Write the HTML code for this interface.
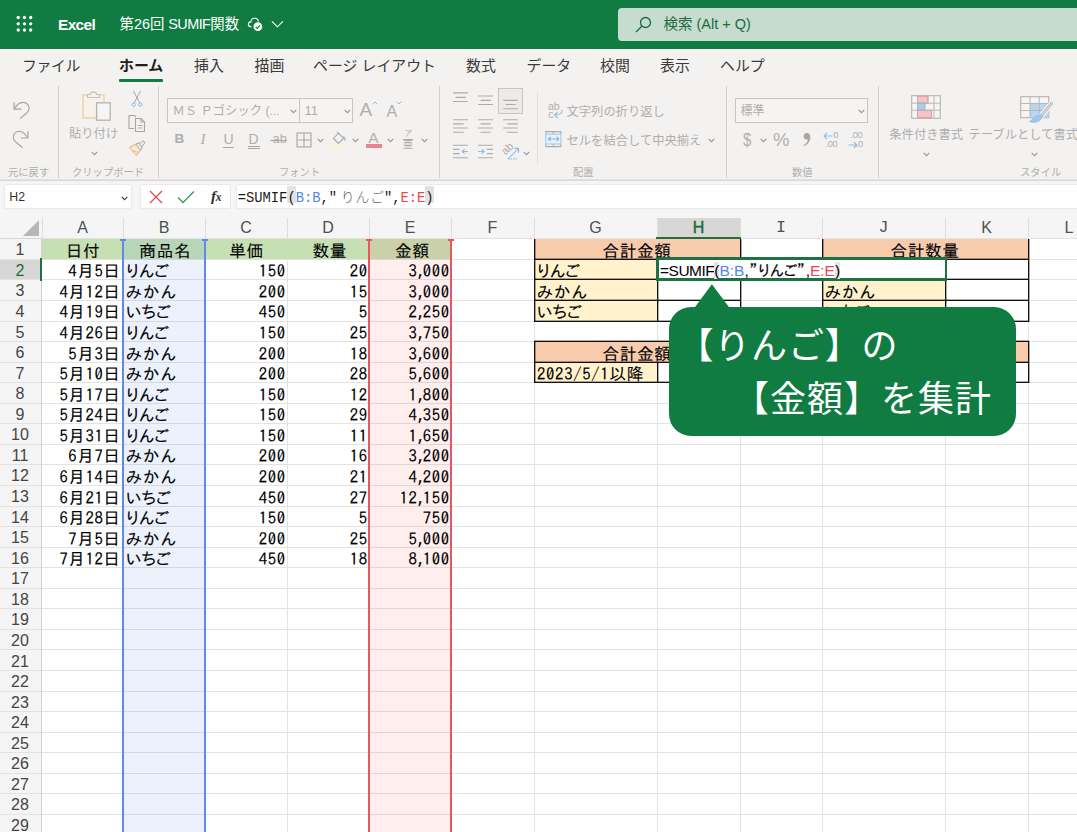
<!DOCTYPE html><html lang="ja"><head><meta charset="utf-8"><title>Excel</title><style>
*{box-sizing:border-box;margin:0;padding:0}
html,body{width:1077px;height:832px;overflow:hidden;background:#fff}
body{position:relative;font-family:"Liberation Sans","Noto Sans CJK JP",sans-serif;color:#252423}
.abs{position:absolute}
#topbar{position:absolute;left:0;top:0;width:1077px;height:48.5px;background:#107c41}
#topbar .t{position:absolute;color:#fff;white-space:nowrap}
#search{position:absolute;left:617.5px;top:7.5px;width:470px;height:33px;background:#c5dccf;border-radius:4px}
#search .t{color:#1d6a41}
#tabs{position:absolute;left:0;top:48.5px;width:1077px;height:36px;background:#f3f2f1}
#tabs .tab{position:absolute;top:0;height:36px;line-height:35px;font-size:14.9px;color:#3b3a39;white-space:nowrap}
#ribbon{position:absolute;left:0;top:84px;width:1077px;height:97px;background:#f3f2f1}
#ribbon .sep{position:absolute;top:2px;height:92px;width:1px;background:#d2d0ce}
#ribbon .lbl{position:absolute;font-size:10.3px;color:#b0aeac;white-space:nowrap;top:80.7px;line-height:16px}
#ribbon .g{position:absolute;color:#b0aeac;white-space:nowrap}
#fbar{position:absolute;left:0;top:181px;width:1077px;height:36px;background:#f5f5f5}
#fbar .box{position:absolute;top:3px;height:25px;background:#fff;border:1px solid #ebe9e7;border-radius:2px}
#grid{position:absolute;left:0;top:0;width:1077px;height:832px;overflow:hidden;pointer-events:none}
.colhdr{position:absolute;left:0;top:217px;width:1077px;height:21.5px;background:#f5f5f5;border-bottom:1px solid #d4d4d4}
.rowhdr{position:absolute;left:0;top:238.5px;width:42px;height:600px;background:#f5f5f5;border-right:1px solid #d4d4d4}
.cl{position:absolute;top:217px;height:21px;line-height:22px;text-align:center;font-size:16px;color:#505050;font-family:"Liberation Sans",sans-serif}
.cl.sel{background:#d9d7d5;color:#1e6b41;-webkit-text-stroke:0.45px #1e6b41;top:218px;height:20px;line-height:20px}
.chs{position:absolute;top:218px;height:21px;width:1px;background:#dedede}
.rn{position:absolute;left:0;width:40px;text-align:center;font-size:16px;color:#444;line-height:21px;font-family:"Liberation Sans",sans-serif}
.rn.sel{background:#d9d7d5;color:#1e6b41}
.hl{position:absolute;left:42px;width:1040px;height:1px;background:#e3e3e3}
.vl{position:absolute;top:239px;height:600px;width:1px;background:#e3e3e3}
.c{position:absolute;font-family:"IPAPGothic","IPAGothic","Noto Sans CJK JP",sans-serif;font-size:16.7px;color:#000;white-space:nowrap;overflow:visible;-webkit-text-stroke:0.1px #000}
.c.r{text-align:right}
.c.m{text-align:center;letter-spacing:0.6px}
.fill{position:absolute}
.bk{position:absolute;background:#111}
.bk2{position:absolute;background:rgba(0,0,0,0.33)}
.ed{font-family:"Liberation Sans","IPAGothic",sans-serif;font-size:15.5px;color:#000;white-space:nowrap}
.ed .hp{background:#e5e5e5}
.c.n{font-family:"IPAGothic","Noto Sans CJK JP",sans-serif;letter-spacing:0.7px}
.cm{margin-right:-3.8px}
#ribbon .sep2{position:absolute;top:8px;height:72px;width:1px;background:#e1dfdd}
.chev{fill:none;stroke:#989694;stroke-width:1.1}
.ibox{border:1px solid #c8c6c4;background:#f5f4f3}
.fx{font-family:"Liberation Mono","Noto Sans CJK JP",monospace;font-size:13.8px;line-height:18px;color:#1b1b1b;white-space:nowrap}
.fx .hp{position:relative;z-index:0}
.fx .hp::before{content:'';position:absolute;left:0;right:0;top:-5px;bottom:2.5px;background:#e2e2e2;z-index:-1}
.fx .bl{color:#5b84e3}
.fx .rd{color:#e8474f}
.fx .jp{font-family:"Noto Sans CJK JP",sans-serif;font-weight:300;color:#666;letter-spacing:0.9px;margin:0 -1px 0 3.8px}
#ribbon .dc{font-size:9.3px;line-height:9px;letter-spacing:-0.35px}
.ed .fn{letter-spacing:-0.5px}
.ed .jq{font-family:"IPAPGothic","IPAGothic",sans-serif;font-size:15.2px;-webkit-text-stroke:0.15px #000;margin-left:1px}
.c.d{padding-right:2.6px !important;letter-spacing:0.5px}

</style></head><body>
<div id="topbar">
  <svg class="abs" style="left:15px;top:14px" width="20" height="20" viewBox="0 0 20 20" fill="#fff">
    <circle cx="3.2" cy="3.5" r="1.65"/><circle cx="9.45" cy="3.5" r="1.65"/><circle cx="15.7" cy="3.5" r="1.65"/>
    <circle cx="3.2" cy="9.8" r="1.65"/><circle cx="9.45" cy="9.8" r="1.65"/><circle cx="15.7" cy="9.8" r="1.65"/>
    <circle cx="3.2" cy="16" r="1.65"/><circle cx="9.45" cy="16" r="1.65"/><circle cx="15.7" cy="16" r="1.65"/>
  </svg>
  <div class="t" style="left:58px;top:14px;font-size:15.4px;font-weight:bold;line-height:22px;letter-spacing:-0.6px">Excel</div>
  <div class="t" style="left:119.5px;top:13px;font-size:14.4px;line-height:22px">第26回 <span style="letter-spacing:-0.55px">SUMIF</span>関数</div>
  <svg class="abs" style="left:246px;top:16px" width="18" height="18" viewBox="0 0 18 18" fill="none"><path d="M5.2 10.8 C1.6 10.8 1.4 6.2 4.8 5.9 C5.2 1.2 11.6 1.2 12.3 5.2" stroke="#fff" stroke-width="1.1" stroke-linecap="round"/><circle cx="11.9" cy="10.7" r="4.4" fill="#fff"/><path d="M9.7 10.9 L11.2 12.4 L14 9.3" stroke="#107c41" stroke-width="1.1"/></svg>
  <svg class="abs" style="left:271px;top:20px" width="13" height="8" viewBox="0 0 13 8" fill="none" stroke="#fff" stroke-width="1.1"><path d="M0.9 1.3 L6.4 6.8 L11.9 1.3"/></svg>
  <div id="search">
    <svg class="abs" style="left:17px;top:8px" width="17" height="17" viewBox="0 0 17 17" fill="none" stroke="#1d6a41" stroke-width="1.3"><circle cx="10.5" cy="6.5" r="5"/><path d="M7 10 L1 16"/></svg>
    <div class="t" style="left:46px;top:6px;font-size:14.5px;line-height:21px">検索 (Alt + Q)</div>
  </div>
</div>
<div id="tabs">
  <div class="tab" style="left:22px;letter-spacing:-0.4px">ファイル</div>
  <div class="tab" style="left:119px;font-weight:bold;color:#201f1e">ホーム</div>
  <div class="abs" style="left:119px;top:30px;width:44px;height:3px;background:#107c41;border-radius:1px"></div>
  <div class="tab" style="left:194px">挿入</div>
  <div class="tab" style="left:254.5px">描画</div>
  <div class="tab" style="left:313px">ページ レイアウト</div>
  <div class="tab" style="left:466px">数式</div>
  <div class="tab" style="left:526.5px">データ</div>
  <div class="tab" style="left:600px">校閲</div>
  <div class="tab" style="left:660px">表示</div>
  <div class="tab" style="left:720px">ヘルプ</div>
</div>
<div id="ribbon">
  <div class="sep" style="left:58px"></div>
  <div class="sep" style="left:157.5px"></div>
  <div class="sep" style="left:439px"></div>
  <div class="sep" style="left:726px"></div>
  <div class="sep" style="left:878px"></div>
  <div class="sep2" style="left:537px"></div>
  <div class="lbl" style="left:8px">元に戻す</div>
  <div class="lbl" style="left:72px">クリップボード</div>
  <div class="lbl" style="left:279px">フォント</div>
  <div class="lbl" style="left:573px">配置</div>
  <div class="lbl" style="left:792px">数値</div>
  <div class="lbl" style="left:1020px">スタイル</div>

  <!-- undo / redo -->
  <svg class="abs" style="left:12px;top:16px" width="20" height="20" viewBox="0 0 20 20" fill="none" stroke="#a8a6a4" stroke-width="1.2"><path d="M2 2.3 V9.2 H9.3"/><path d="M2.6 8.8 C4.5 5 7.5 2.4 11 2.4 C14.5 2.4 17.1 5 17.1 8.3 C17.1 10.5 16 12 14.5 13.3 L8 18.6"/></svg>
  <svg class="abs" style="left:11px;top:46px" width="20" height="20" viewBox="0 0 20 20" fill="none" stroke="#a8a6a4" stroke-width="1.2"><path d="M16.9 1.3 V8 H9.8"/><path d="M16.3 7.7 C14.4 4 11.5 1.4 8 1.4 C4.5 1.4 2.4 4 2.4 7.4 C2.4 9.6 3.5 11 5 12.3 L11.7 17.7"/></svg>

  <!-- paste -->
  <svg class="abs" style="left:80px;top:4px" width="34" height="36" viewBox="0 0 34 36" fill="none">
    <path d="M8 7 L3 7 L3 30 L16 30 M19 7 L24 7 L24 14" stroke="#f5cfa3" stroke-width="1.4"/>
    <rect x="4" y="8" width="19" height="21" fill="#fbf1e2" opacity="0.45"/>
    <path d="M7.5 9.5 L7.5 6.5 L10.5 6.5 C10.5 3 16.5 3 16.5 6.5 L19.5 6.5 L19.5 9.5 Z" stroke="#c4c2c0" stroke-width="1.1" fill="#f3f2f1"/>
    <rect x="16.6" y="14.8" width="13.6" height="17.4" stroke="#b5b3b1" stroke-width="1.3" fill="#f6f5f4"/>
  </svg>
  <div class="g" style="left:69px;top:41px;font-size:12.3px;line-height:18px">貼り付け</div>
  <svg class="abs chev" style="left:90.5px;top:67px" width="7" height="5" viewBox="0 0 7 5"><path d="M0.7 0.8 L3.5 3.6 L6.3 0.8"/></svg>
  <!-- cut -->
  <svg class="abs" style="left:130px;top:6px" width="14" height="18" viewBox="0 0 14 18" fill="none"><path d="M3.5 1 L9.8 13 M10.5 1 L4.2 13" stroke="#a9a7a5" stroke-width="1"/><circle cx="3.7" cy="14.6" r="1.7" stroke="#8dbde6" stroke-width="1"/><circle cx="10.3" cy="14.6" r="1.7" stroke="#8dbde6" stroke-width="1"/></svg>
  <!-- copy -->
  <svg class="abs" style="left:127px;top:30px" width="20" height="19" viewBox="0 0 20 19" fill="none" stroke="#a9a7a5" stroke-width="1.1"><path d="M7 14.5 L2 14.5 L2 1.5 L7.5 1.5 L9 3"/><path d="M8.5 4.5 L14 4.5 L17.5 8 L17.5 17.5 L8.5 17.5 Z" fill="#f3f2f1"/><path d="M14 4.5 L14 8 L17.5 8"/><path d="M11 11.5 L15.5 11.5 M11 14 L15.5 14" stroke-width="0.9"/></svg>
  <!-- format painter -->
  <svg class="abs" style="left:128px;top:55px" width="19" height="18" viewBox="0 0 19 18" fill="none"><path d="M1.5 8.5 L9 4.5 L13 10.5 L8.5 16.5 Z" fill="#fbe7d0" stroke="#efb98a" stroke-width="1.1"/><path d="M4 11.5 L10.5 13.5" stroke="#efb98a" stroke-width="1"/><path d="M8.3 5.3 L10.6 3.8 L14.2 9.2 L12 10.7 Z M11.5 4.8 L15 1.7 L16.8 3.5 L14 7.6" stroke="#b5b3b1" stroke-width="1.1" fill="#f6f5f4"/></svg>

  <!-- font box -->
  <div class="abs ibox" style="left:166.5px;top:14px;width:133.5px;height:25px"></div>
  <div class="abs ibox" style="left:299px;top:14px;width:54px;height:25px"></div>
  <div class="g" style="left:172.5px;top:18px;font-size:12.3px;line-height:18px">ＭＳ Ｐゴシック (...</div>
  <svg class="abs chev" style="left:290px;top:25px" width="7" height="5" viewBox="0 0 7 5"><path d="M0.7 0.8 L3.5 3.6 L6.3 0.8"/></svg>
  <div class="g" style="left:304.5px;top:18px;font-size:13px;line-height:18px">11</div>
  <svg class="abs chev" style="left:343.5px;top:25px" width="7" height="5" viewBox="0 0 7 5"><path d="M0.7 0.8 L3.5 3.6 L6.3 0.8"/></svg>
  <div class="g" style="left:359.5px;top:14px;font-size:19px;line-height:24px">A</div>
  <svg class="abs" style="left:372px;top:17px" width="6" height="4" viewBox="0 0 6 4" fill="none" stroke="#8dbde6" stroke-width="1"><path d="M0.7 3.3 L3 1 L5.3 3.3"/></svg>
  <div class="g" style="left:386.5px;top:17px;font-size:16px;line-height:22px">A</div>
  <svg class="abs" style="left:396px;top:17px" width="6" height="4" viewBox="0 0 6 4" fill="none" stroke="#8dbde6" stroke-width="1"><path d="M0.7 0.7 L3 3 L5.3 0.7"/></svg>
  <!-- B I U D ab -->
  <div class="g" style="left:174.5px;top:45.3px;font-size:13.5px;line-height:20px;font-weight:bold">B</div>
  <div class="g" style="left:200.5px;top:45.3px;font-size:15px;line-height:20px;font-style:italic;font-family:'Liberation Serif',serif">I</div>
  <div class="g" style="left:223.5px;top:45.3px;font-size:14px;line-height:20px">U</div>
  <div class="abs" style="left:223px;top:62.5px;width:11px;height:1px;background:#a9a7a5"></div>
  <div class="g" style="left:248.5px;top:45.3px;font-size:14px;line-height:20px">D</div>
  <div class="abs" style="left:248px;top:61.5px;width:12px;height:3px;border-top:1px solid #a9a7a5;border-bottom:1px solid #a9a7a5"></div>
  <div class="g" style="left:272.5px;top:45.3px;font-size:13px;line-height:20px">ab</div>
  <div class="abs" style="left:270px;top:56px;width:17px;height:1px;background:#a9a7a5"></div>
  <!-- borders -->
  <svg class="abs" style="left:295.5px;top:47.5px" width="16" height="16" viewBox="0 0 16 16" fill="none" stroke="#a9a7a5" stroke-width="1.1"><rect x="1" y="1" width="14" height="14"/><path d="M8 1 L8 15 M1 8 L15 8"/></svg>
  <svg class="abs chev" style="left:317px;top:54px" width="7" height="5" viewBox="0 0 7 5"><path d="M0.7 0.8 L3.5 3.6 L6.3 0.8"/></svg>
  <!-- fill color -->
  <svg class="abs" style="left:330px;top:46px" width="18" height="18" viewBox="0 0 18 18" fill="none"><path d="M3.5 8.5 L8.5 3 L13.5 8.5 L8.5 13.5 Z" stroke="#a9a7a5" stroke-width="1.1"/><path d="M7 1.5 L9.5 4.5" stroke="#a9a7a5" stroke-width="1"/><path d="M13.2 6.5 C15 8 15.2 10 14.6 11" stroke="#8dbde6" stroke-width="1.1"/><rect x="0.5" y="15" width="16" height="3" fill="#faf4d6"/></svg>
  <svg class="abs chev" style="left:351.5px;top:54px" width="7" height="5" viewBox="0 0 7 5"><path d="M0.7 0.8 L3.5 3.6 L6.3 0.8"/></svg>
  <!-- font color -->
  <div class="g" style="left:368.5px;top:44px;font-size:15px;line-height:20px">A</div>
  <div class="abs" style="left:365.5px;top:60.3px;width:16.5px;height:3.5px;background:#ee828a"></div>
  <svg class="abs chev" style="left:386.5px;top:54px" width="7" height="5" viewBox="0 0 7 5"><path d="M0.7 0.8 L3.5 3.6 L6.3 0.8"/></svg>
  <!-- phonetic -->
  <div class="g" style="left:404.3px;top:44.7px;font-size:8px;line-height:9px">ア</div>
  <div class="abs" style="left:403px;top:54.5px;width:10px;height:1px;background:#a9a7a5"></div>
  <div class="g" style="left:403px;top:55.5px;font-size:10px;line-height:10px">亜</div>
  <svg class="abs chev" style="left:421px;top:54px" width="7" height="5" viewBox="0 0 7 5"><path d="M0.7 0.8 L3.5 3.6 L6.3 0.8"/></svg>

  <!-- alignment icons -->
  <div class="abs" style="left:498px;top:4px;width:25px;height:25.5px;border:1px solid #c8c6c4;background:#edebe9"></div>
  <svg class="abs" style="left:450px;top:4px" width="82" height="76" viewBox="0 0 82 76" fill="none" stroke="#aeacaa" stroke-width="1.1"><path d="M3.1 4.9 H17.9 M5.6 9.4 H15.8 M3.1 13.5 H17.9"/><path d="M28.1 8 H42.9 M30.6 12.4 H40.8 M28.1 16.5 H42.9"/><path d="M53.2 12.4 H67.8 M55.7 16.5 H65.7 M53.2 20.7 H67.8"/><path d="M3.1 31.7 H17.9 M3.1 35.9 H13.7 M3.1 40 H17.9 M3.1 44.2 H13.7"/><path d="M28.1 31.7 H42.9 M30.5 35.9 H40.7 M28.1 40 H42.9 M30.5 44.2 H40.7"/><path d="M53.2 31.7 H67.8 M57.2 35.9 H67.8 M53.2 40 H67.8 M57.2 44.2 H67.8"/><path d="M3.1 57.3 H17.9 M3.1 61.4 H9.5 M3.1 65.6 H9.5 M3.1 69.8 H17.9"/><path d="M17.9 63.5 H12.2 M14.6 61.1 L12.2 63.5 L14.6 65.9" stroke="#8dbde6"/><path d="M28.1 57.3 H42.9 M36.7 61.4 H42.9 M36.7 65.6 H42.9 M28.1 69.8 H42.9"/><path d="M28.1 63.5 H34.2 M31.8 61.1 L34.2 63.5 L31.8 65.9" stroke="#8dbde6"/><path d="M58 70.9 L68.4 60.6 M64.2 60.4 H68.6 V64.8" stroke="#8dbde6"/><path d="M58 70.9 H67" stroke="#8dbde6" stroke-dasharray="1.6 1"/></svg>
  <div class="g" style="left:501.5px;top:54.5px;font-size:11px;line-height:12px;transform:rotate(-45deg);transform-origin:left bottom;margin-top:6px;margin-left:5px">ab</div>
  <svg class="abs chev" style="left:523.2px;top:66.5px" width="7" height="5" viewBox="0 0 7 5"><path d="M0.7 0.8 L3.5 3.6 L6.3 0.8"/></svg>

  <!-- wrap text -->
  <div class="g" style="left:548px;top:17.2px;font-size:10.6px;line-height:10px;letter-spacing:-0.2px">ab</div>
  <div class="g" style="left:548.2px;top:24.7px;font-size:10.6px;line-height:10px">c</div>
  <svg class="abs" style="left:553px;top:24px" width="11" height="12" viewBox="0 0 11 12" fill="none" stroke="#8dbde6" stroke-width="1.1"><path d="M9 1.6 C10 5 7.5 6.6 1.8 6.9 M4.8 3.8 L1.6 6.9 L4.6 10"/></svg>
  <div class="g" style="left:566.5px;top:18.7px;font-size:12.3px;line-height:18px">文字列の折り返し</div>
  <!-- merge -->
  <svg class="abs" style="left:545px;top:47px" width="17" height="17" viewBox="0 0 17 17" fill="none"><path d="M0.8 3.1 V0.6 H15.9 V3.1 M0.8 13 V15.6 H15.9 V13 M8.35 0.6 V3.1 M8.35 13 V15.6" stroke="#aeacaa" stroke-width="1.1"/><rect x="0.8" y="3.1" width="15.1" height="9.9" fill="#e9f2fb" stroke="#9cc5ea" stroke-width="1"/><path d="M3.4 8.05 H13.8 M5.6 5.9 L3.4 8.05 L5.6 10.2 M11.6 5.9 L13.8 8.05 L11.6 10.2" stroke="#7fb4e3" stroke-width="1.1"/></svg>
  <div class="g" style="left:566.5px;top:47.5px;font-size:12.3px;line-height:18px">セルを結合して中央揃え</div>
  <svg class="abs chev" style="left:707.5px;top:54px" width="7" height="5" viewBox="0 0 7 5"><path d="M0.7 0.8 L3.5 3.6 L6.3 0.8"/></svg>

  <!-- number -->
  <div class="abs ibox" style="left:735px;top:14px;width:133px;height:25px"></div>
  <div class="g" style="left:740.5px;top:18px;font-size:12px;line-height:18px">標準</div>
  <svg class="abs chev" style="left:857.5px;top:25px" width="7" height="5" viewBox="0 0 7 5"><path d="M0.7 0.8 L3.5 3.6 L6.3 0.8"/></svg>
  <div class="g" style="left:742.5px;top:44.5px;font-size:17.5px;line-height:22px;transform:scale(0.85,1.05);transform-origin:left center">$</div>
  <svg class="abs chev" style="left:760px;top:54px" width="7" height="5" viewBox="0 0 7 5"><path d="M0.7 0.8 L3.5 3.6 L6.3 0.8"/></svg>
  <div class="g" style="left:773px;top:45px;font-size:18.5px;line-height:22px">%</div>
  <svg class="abs" style="left:801px;top:48px" width="12" height="16" viewBox="0 0 12 16"><path d="M5.9 1.1 C3.9 1.1 2.6 2.6 2.6 4.4 C2.6 6.2 4 7.6 5.7 7.6 C6.2 7.6 6.6 7.5 7 7.3 C6.6 10 4.9 12 2.5 13.3 L3 14.2 C6.8 12.6 9.3 9.2 9.3 5 C9.3 2.6 7.9 1.1 5.9 1.1 Z" fill="#a8a6a4"/></svg>
  <div class="g dc" style="left:833.3px;top:47px">0</div>
  <div class="g dc" style="left:825.5px;top:56px">.00</div>
  <svg class="abs" style="left:823px;top:47.5px" width="10" height="8" viewBox="0 0 10 8" fill="none" stroke="#8dbde6" stroke-width="1.1"><path d="M9.3 4 H1 M4 1 L1 4 L4 7"/></svg>
  <div class="g dc" style="left:850.5px;top:47px">.00</div>
  <div class="g dc" style="left:855.7px;top:56px">.0</div>
  <svg class="abs" style="left:847.5px;top:57px" width="10" height="8" viewBox="0 0 10 8" fill="none" stroke="#8dbde6" stroke-width="1.1"><path d="M0.5 4 H8.8 M5.8 1 L8.8 4 L5.8 7"/></svg>

  <!-- conditional formatting -->
  <svg class="abs" style="left:911px;top:11px" width="30" height="24" viewBox="0 0 30 24" fill="none"><rect x="0.7" y="0.7" width="28.6" height="22.6" fill="#f6f5f4" stroke="#b5b3b1" stroke-width="1.1"/><rect x="6.5" y="1.2" width="10.5" height="7" fill="#f4c4c8" stroke="#e9878e" stroke-width="0.8"/><rect x="6.5" y="8.2" width="7.5" height="7" fill="#a9cdee" stroke="#7fb2e0" stroke-width="0.8"/><rect x="6.5" y="15.2" width="14" height="7.5" fill="#f4c4c8" stroke="#e9878e" stroke-width="0.8"/><path d="M6.5 1 V23 M0.7 8.2 H29.3 M0.7 15.2 H29.3 M17 1 V8 M23 1 V23" stroke="#b5b3b1" stroke-width="0.9"/></svg>
  <div class="g" style="left:889.3px;top:41.5px;font-size:12.3px;line-height:18px">条件付き書式</div>
  <svg class="abs chev" style="left:922.5px;top:67.5px" width="7" height="5" viewBox="0 0 7 5"><path d="M0.7 0.8 L3.5 3.6 L6.3 0.8"/></svg>
  <!-- format as table -->
  <svg class="abs" style="left:1020px;top:10px" width="34" height="32" viewBox="0 0 34 32" fill="none"><rect x="0.7" y="2.7" width="28" height="21" fill="#f6f5f4" stroke="#b5b3b1" stroke-width="1.1"/><rect x="10" y="9.5" width="18.5" height="14" fill="#b9d6f1"/><path d="M10 2.7 V23.7 M19.3 2.7 V23.7 M0.7 9.5 H28.7 M0.7 16.5 H28.7" stroke="#b5b3b1" stroke-width="0.9"/><path d="M32 9 L19 24.5" stroke="#f3f2f1" stroke-width="5.5"/><path d="M31.6 9.4 L21 22" stroke="#b5b3b1" stroke-width="2.8" stroke-linecap="round"/><path d="M31.6 9.4 L21 22" stroke="#f6f5f4" stroke-width="1" stroke-linecap="round"/><path d="M20.6 20.8 C17 20.6 15 23 9.5 27.6 C14 29.5 21 28 22.4 22.6 Z" fill="#9cc7ec" stroke="#84b6e2" stroke-width="0.6"/></svg>
  <div class="g" style="left:968.5px;top:41.5px;font-size:12.3px;line-height:18px">テーブルとして書式設定</div>
  <svg class="abs chev" style="left:1031px;top:67.5px" width="7" height="5" viewBox="0 0 7 5"><path d="M0.7 0.8 L3.5 3.6 L6.3 0.8"/></svg>
</div>
<div class="abs" style="left:0;top:179px;width:1077px;height:2px;background:linear-gradient(#e9e7e5,#d6d4d2)"></div>
<div id="fbar">
  <div class="box" style="left:4.3px;width:127.7px"></div>
  <div class="box" style="left:140.4px;width:90.6px"></div>
  <div class="box" style="left:235.6px;width:850px"></div>
  <div class="abs" style="left:9.3px;top:7.3px;font-size:12.3px;line-height:18px;color:#323130">H2</div>
  <svg class="abs" style="left:121px;top:14.5px" width="7" height="5" viewBox="0 0 7 5" fill="none" stroke="#444" stroke-width="1.2"><path d="M0.7 0.8 L3.5 3.6 L6.3 0.8"/></svg>
  <svg class="abs" style="left:148.5px;top:9px" width="14" height="14" viewBox="0 0 14 14" fill="none" stroke="#e8474f" stroke-width="1.3"><path d="M1 1 L13 13 M13 1 L1 13"/></svg>
  <svg class="abs" style="left:177px;top:9px" width="18" height="14" viewBox="0 0 18 14" fill="none" stroke="#3a9a56" stroke-width="1.3"><path d="M1 7.5 L6 12.5 L17 1.5"/></svg>
  <div class="abs" style="left:211px;top:6.3px;font-size:14.5px;line-height:18px;font-style:italic;font-family:'Liberation Serif',serif;color:#323130;letter-spacing:-0.5px"><b style="font-size:15.5px">f</b><b style="font-size:11.5px">x</b></div>
  <div class="abs fx" style="left:237.7px;top:5.8px">=SUMIF<span class="hp">(</span><span class="bl">B:B</span>,"<span class="jp">りんご</span>",<span class="rd">E:E</span><span class="hp">)</span></div>
</div>

<div id="grid">
<div class="colhdr"></div>
<div class="cl" style="left:42px;width:81px">A</div>
<div class="cl" style="left:123px;width:82px">B</div>
<div class="cl" style="left:205px;width:82px">C</div>
<div class="cl" style="left:287px;width:82px">D</div>
<div class="cl" style="left:369px;width:82px">E</div>
<div class="cl" style="left:451px;width:83px">F</div>
<div class="cl" style="left:534px;width:123px">G</div>
<div class="cl sel" style="left:657px;width:83px">H</div>
<div class="cl" style="left:740px;width:82px;font-family:'Liberation Mono',monospace;font-size:16.5px">I</div>
<div class="cl" style="left:822px;width:123px;font-family:'Liberation Mono',monospace;font-size:16.5px">J</div>
<div class="cl" style="left:945px;width:83px">K</div>
<div class="cl" style="left:1028px;width:82px">L</div>
<div class="chs" style="left:42px"></div>
<div class="chs" style="left:123px"></div>
<div class="chs" style="left:205px"></div>
<div class="chs" style="left:287px"></div>
<div class="chs" style="left:369px"></div>
<div class="chs" style="left:451px"></div>
<div class="chs" style="left:534px"></div>
<div class="chs" style="left:657px"></div>
<div class="chs" style="left:740px"></div>
<div class="chs" style="left:822px"></div>
<div class="chs" style="left:945px"></div>
<div class="chs" style="left:1028px"></div>
<div class="rowhdr"></div>
<div class="rn" style="top:239.30px;height:20.56px">1</div>
<div class="rn sel" style="top:259.86px;height:20.56px">2</div>
<div class="rn" style="top:280.42px;height:20.56px">3</div>
<div class="rn" style="top:300.98px;height:20.56px">4</div>
<div class="rn" style="top:321.54px;height:20.56px">5</div>
<div class="rn" style="top:342.10px;height:20.56px">6</div>
<div class="rn" style="top:362.66px;height:20.56px">7</div>
<div class="rn" style="top:383.22px;height:20.56px">8</div>
<div class="rn" style="top:403.78px;height:20.56px">9</div>
<div class="rn" style="top:424.34px;height:20.56px">10</div>
<div class="rn" style="top:444.90px;height:20.56px">11</div>
<div class="rn" style="top:465.46px;height:20.56px">12</div>
<div class="rn" style="top:486.02px;height:20.56px">13</div>
<div class="rn" style="top:506.58px;height:20.56px">14</div>
<div class="rn" style="top:527.14px;height:20.56px">15</div>
<div class="rn" style="top:547.70px;height:20.56px">16</div>
<div class="rn" style="top:568.26px;height:20.56px">17</div>
<div class="rn" style="top:588.82px;height:20.56px">18</div>
<div class="rn" style="top:609.38px;height:20.56px">19</div>
<div class="rn" style="top:629.94px;height:20.56px">20</div>
<div class="rn" style="top:650.50px;height:20.56px">21</div>
<div class="rn" style="top:671.06px;height:20.56px">22</div>
<div class="rn" style="top:691.62px;height:20.56px">23</div>
<div class="rn" style="top:712.18px;height:20.56px">24</div>
<div class="rn" style="top:732.74px;height:20.56px">25</div>
<div class="rn" style="top:753.30px;height:20.56px">26</div>
<div class="rn" style="top:773.86px;height:20.56px">27</div>
<div class="rn" style="top:794.42px;height:20.56px">28</div>
<div class="rn" style="top:814.98px;height:20.56px">29</div>
<div class="abs" style="left:0;top:259px;width:41px;height:1px;background:#e2e2e2"></div>
<div class="abs" style="left:0;top:279px;width:41px;height:1px;background:#e2e2e2"></div>
<div class="abs" style="left:0;top:300px;width:41px;height:1px;background:#e2e2e2"></div>
<div class="abs" style="left:0;top:321px;width:41px;height:1px;background:#e2e2e2"></div>
<div class="abs" style="left:0;top:341px;width:41px;height:1px;background:#e2e2e2"></div>
<div class="abs" style="left:0;top:362px;width:41px;height:1px;background:#e2e2e2"></div>
<div class="abs" style="left:0;top:382px;width:41px;height:1px;background:#e2e2e2"></div>
<div class="abs" style="left:0;top:403px;width:41px;height:1px;background:#e2e2e2"></div>
<div class="abs" style="left:0;top:423px;width:41px;height:1px;background:#e2e2e2"></div>
<div class="abs" style="left:0;top:444px;width:41px;height:1px;background:#e2e2e2"></div>
<div class="abs" style="left:0;top:464px;width:41px;height:1px;background:#e2e2e2"></div>
<div class="abs" style="left:0;top:485px;width:41px;height:1px;background:#e2e2e2"></div>
<div class="abs" style="left:0;top:506px;width:41px;height:1px;background:#e2e2e2"></div>
<div class="abs" style="left:0;top:526px;width:41px;height:1px;background:#e2e2e2"></div>
<div class="abs" style="left:0;top:547px;width:41px;height:1px;background:#e2e2e2"></div>
<div class="abs" style="left:0;top:567px;width:41px;height:1px;background:#e2e2e2"></div>
<div class="abs" style="left:0;top:588px;width:41px;height:1px;background:#e2e2e2"></div>
<div class="abs" style="left:0;top:608px;width:41px;height:1px;background:#e2e2e2"></div>
<div class="abs" style="left:0;top:629px;width:41px;height:1px;background:#e2e2e2"></div>
<div class="abs" style="left:0;top:649px;width:41px;height:1px;background:#e2e2e2"></div>
<div class="abs" style="left:0;top:670px;width:41px;height:1px;background:#e2e2e2"></div>
<div class="abs" style="left:0;top:691px;width:41px;height:1px;background:#e2e2e2"></div>
<div class="abs" style="left:0;top:711px;width:41px;height:1px;background:#e2e2e2"></div>
<div class="abs" style="left:0;top:732px;width:41px;height:1px;background:#e2e2e2"></div>
<div class="abs" style="left:0;top:752px;width:41px;height:1px;background:#e2e2e2"></div>
<div class="abs" style="left:0;top:773px;width:41px;height:1px;background:#e2e2e2"></div>
<div class="abs" style="left:0;top:793px;width:41px;height:1px;background:#e2e2e2"></div>
<div class="abs" style="left:0;top:814px;width:41px;height:1px;background:#e2e2e2"></div>
<div class="abs" style="left:0;top:835px;width:41px;height:1px;background:#e2e2e2"></div>
<div class="abs" style="left:40px;top:258px;width:2px;height:23px;background:#1e7145"></div>
<svg class="abs" style="left:20px;top:218px" width="20" height="20" viewBox="0 0 20 20"><path d="M19 2 L19 18 L3 18 Z" fill="#b7b7b7"/></svg>
<div class="fill" style="left:42.00px;top:239.30px;width:409.00px;height:20.56px;background:#c6e0b4"></div>
<div class="fill" style="left:534.00px;top:239.30px;width:206.00px;height:20.56px;background:#f8cbad"></div>
<div class="fill" style="left:534.00px;top:259.86px;width:123.00px;height:61.68px;background:#fff2cc"></div>
<div class="fill" style="left:534.00px;top:342.10px;width:206.00px;height:20.56px;background:#f8cbad"></div>
<div class="fill" style="left:534.00px;top:362.66px;width:123.00px;height:20.56px;background:#fff2cc"></div>
<div class="fill" style="left:822.00px;top:239.30px;width:206.00px;height:20.56px;background:#f8cbad"></div>
<div class="fill" style="left:822.00px;top:259.86px;width:123.00px;height:61.68px;background:#fff2cc"></div>
<div class="fill" style="left:822.00px;top:342.10px;width:206.00px;height:20.56px;background:#f8cbad"></div>
<div class="fill" style="left:822.00px;top:362.66px;width:123.00px;height:20.56px;background:#fff2cc"></div>
<div class="hl" style="top:238px"></div>
<div class="hl" style="top:259px"></div>
<div class="hl" style="top:279px"></div>
<div class="hl" style="top:300px"></div>
<div class="hl" style="top:321px"></div>
<div class="hl" style="top:341px"></div>
<div class="hl" style="top:362px"></div>
<div class="hl" style="top:382px"></div>
<div class="hl" style="top:403px"></div>
<div class="hl" style="top:423px"></div>
<div class="hl" style="top:444px"></div>
<div class="hl" style="top:464px"></div>
<div class="hl" style="top:485px"></div>
<div class="hl" style="top:506px"></div>
<div class="hl" style="top:526px"></div>
<div class="hl" style="top:547px"></div>
<div class="hl" style="top:567px"></div>
<div class="hl" style="top:588px"></div>
<div class="hl" style="top:608px"></div>
<div class="hl" style="top:629px"></div>
<div class="hl" style="top:649px"></div>
<div class="hl" style="top:670px"></div>
<div class="hl" style="top:691px"></div>
<div class="hl" style="top:711px"></div>
<div class="hl" style="top:732px"></div>
<div class="hl" style="top:752px"></div>
<div class="hl" style="top:773px"></div>
<div class="hl" style="top:793px"></div>
<div class="hl" style="top:814px"></div>
<div class="hl" style="top:835px"></div>
<div class="vl" style="left:123px"></div>
<div class="vl" style="left:205px"></div>
<div class="vl" style="left:287px"></div>
<div class="vl" style="left:369px"></div>
<div class="vl" style="left:451px"></div>
<div class="vl" style="left:534px"></div>
<div class="vl" style="left:657px"></div>
<div class="vl" style="left:740px"></div>
<div class="vl" style="left:822px"></div>
<div class="vl" style="left:945px"></div>
<div class="vl" style="left:1028px"></div>
<div class="fill" style="left:42.00px;top:239.30px;width:409.00px;height:19.56px;background:#c6e0b4"></div>
<div class="fill" style="left:123px;top:239.30px;width:82px;height:620px;background:rgba(68,114,226,0.10)"></div>
<div class="fill" style="left:369px;top:239.30px;width:82px;height:620px;background:rgba(240,70,70,0.09)"></div>
<div class="fill" style="left:122px;top:239px;width:2px;height:620px;background:#5f8ae8"></div>
<div class="fill" style="left:120px;top:239px;width:6px;height:2px;background:#5f8ae8"></div>
<div class="fill" style="left:204px;top:239px;width:2px;height:620px;background:#5f8ae8"></div>
<div class="fill" style="left:202px;top:239px;width:6px;height:2px;background:#5f8ae8"></div>
<div class="fill" style="left:368px;top:239px;width:2px;height:620px;background:#e8575c"></div>
<div class="fill" style="left:366px;top:239px;width:6px;height:2px;background:#e8575c"></div>
<div class="fill" style="left:450px;top:239px;width:2px;height:620px;background:#e8575c"></div>
<div class="fill" style="left:448px;top:239px;width:6px;height:2px;background:#e8575c"></div>
<div class="c m" style="left:42px;top:239.80px;width:81px;height:20.56px;line-height:21.56px;padding-left:1.0px;">日付</div>
<div class="c m" style="left:123px;top:239.80px;width:82px;height:20.56px;line-height:21.56px;padding-left:2.6px;">商品名</div>
<div class="c m" style="left:205px;top:239.80px;width:82px;height:20.56px;line-height:21.56px;padding-left:1.2px;">単価</div>
<div class="c m" style="left:287px;top:239.80px;width:82px;height:20.56px;line-height:21.56px;padding-left:3.6px;">数量</div>
<div class="c m" style="left:369px;top:239.80px;width:82px;height:20.56px;line-height:21.56px;padding-left:4.8px;">金額</div>
<div class="c r n d" style="left:42px;top:260.36px;width:81px;height:20.56px;line-height:21.56px;padding-right:1.1px;">4月5日</div>
<div class="c" style="left:123px;top:260.36px;width:82px;height:20.56px;line-height:21.56px;padding-left:3px;">りんご</div>
<div class="c r n" style="left:205px;top:260.36px;width:82px;height:20.56px;line-height:21.56px;padding-right:1.1px;">150</div>
<div class="c r n" style="left:287px;top:260.36px;width:82px;height:20.56px;line-height:21.56px;padding-right:1.1px;">20</div>
<div class="c r n" style="left:369px;top:260.36px;width:82px;height:20.56px;line-height:21.56px;padding-right:1.1px;">3<span class="cm">,</span>000</div>
<div class="c r n d" style="left:42px;top:280.92px;width:81px;height:20.56px;line-height:21.56px;padding-right:1.1px;">4月12日</div>
<div class="c" style="left:123px;top:280.92px;width:82px;height:20.56px;line-height:21.56px;padding-left:3px;letter-spacing:1.3px;">みかん</div>
<div class="c r n" style="left:205px;top:280.92px;width:82px;height:20.56px;line-height:21.56px;padding-right:1.1px;">200</div>
<div class="c r n" style="left:287px;top:280.92px;width:82px;height:20.56px;line-height:21.56px;padding-right:1.1px;">15</div>
<div class="c r n" style="left:369px;top:280.92px;width:82px;height:20.56px;line-height:21.56px;padding-right:1.1px;">3<span class="cm">,</span>000</div>
<div class="c r n d" style="left:42px;top:301.48px;width:81px;height:20.56px;line-height:21.56px;padding-right:1.1px;">4月19日</div>
<div class="c" style="left:123px;top:301.48px;width:82px;height:20.56px;line-height:21.56px;padding-left:3px;">いちご</div>
<div class="c r n" style="left:205px;top:301.48px;width:82px;height:20.56px;line-height:21.56px;padding-right:1.1px;">450</div>
<div class="c r n" style="left:287px;top:301.48px;width:82px;height:20.56px;line-height:21.56px;padding-right:1.1px;">5</div>
<div class="c r n" style="left:369px;top:301.48px;width:82px;height:20.56px;line-height:21.56px;padding-right:1.1px;">2<span class="cm">,</span>250</div>
<div class="c r n d" style="left:42px;top:322.04px;width:81px;height:20.56px;line-height:21.56px;padding-right:1.1px;">4月26日</div>
<div class="c" style="left:123px;top:322.04px;width:82px;height:20.56px;line-height:21.56px;padding-left:3px;">りんご</div>
<div class="c r n" style="left:205px;top:322.04px;width:82px;height:20.56px;line-height:21.56px;padding-right:1.1px;">150</div>
<div class="c r n" style="left:287px;top:322.04px;width:82px;height:20.56px;line-height:21.56px;padding-right:1.1px;">25</div>
<div class="c r n" style="left:369px;top:322.04px;width:82px;height:20.56px;line-height:21.56px;padding-right:1.1px;">3<span class="cm">,</span>750</div>
<div class="c r n d" style="left:42px;top:342.60px;width:81px;height:20.56px;line-height:21.56px;padding-right:1.1px;">5月3日</div>
<div class="c" style="left:123px;top:342.60px;width:82px;height:20.56px;line-height:21.56px;padding-left:3px;letter-spacing:1.3px;">みかん</div>
<div class="c r n" style="left:205px;top:342.60px;width:82px;height:20.56px;line-height:21.56px;padding-right:1.1px;">200</div>
<div class="c r n" style="left:287px;top:342.60px;width:82px;height:20.56px;line-height:21.56px;padding-right:1.1px;">18</div>
<div class="c r n" style="left:369px;top:342.60px;width:82px;height:20.56px;line-height:21.56px;padding-right:1.1px;">3<span class="cm">,</span>600</div>
<div class="c r n d" style="left:42px;top:363.16px;width:81px;height:20.56px;line-height:21.56px;padding-right:1.1px;">5月10日</div>
<div class="c" style="left:123px;top:363.16px;width:82px;height:20.56px;line-height:21.56px;padding-left:3px;letter-spacing:1.3px;">みかん</div>
<div class="c r n" style="left:205px;top:363.16px;width:82px;height:20.56px;line-height:21.56px;padding-right:1.1px;">200</div>
<div class="c r n" style="left:287px;top:363.16px;width:82px;height:20.56px;line-height:21.56px;padding-right:1.1px;">28</div>
<div class="c r n" style="left:369px;top:363.16px;width:82px;height:20.56px;line-height:21.56px;padding-right:1.1px;">5<span class="cm">,</span>600</div>
<div class="c r n d" style="left:42px;top:383.72px;width:81px;height:20.56px;line-height:21.56px;padding-right:1.1px;">5月17日</div>
<div class="c" style="left:123px;top:383.72px;width:82px;height:20.56px;line-height:21.56px;padding-left:3px;">りんご</div>
<div class="c r n" style="left:205px;top:383.72px;width:82px;height:20.56px;line-height:21.56px;padding-right:1.1px;">150</div>
<div class="c r n" style="left:287px;top:383.72px;width:82px;height:20.56px;line-height:21.56px;padding-right:1.1px;">12</div>
<div class="c r n" style="left:369px;top:383.72px;width:82px;height:20.56px;line-height:21.56px;padding-right:1.1px;">1<span class="cm">,</span>800</div>
<div class="c r n d" style="left:42px;top:404.28px;width:81px;height:20.56px;line-height:21.56px;padding-right:1.1px;">5月24日</div>
<div class="c" style="left:123px;top:404.28px;width:82px;height:20.56px;line-height:21.56px;padding-left:3px;">りんご</div>
<div class="c r n" style="left:205px;top:404.28px;width:82px;height:20.56px;line-height:21.56px;padding-right:1.1px;">150</div>
<div class="c r n" style="left:287px;top:404.28px;width:82px;height:20.56px;line-height:21.56px;padding-right:1.1px;">29</div>
<div class="c r n" style="left:369px;top:404.28px;width:82px;height:20.56px;line-height:21.56px;padding-right:1.1px;">4<span class="cm">,</span>350</div>
<div class="c r n d" style="left:42px;top:424.84px;width:81px;height:20.56px;line-height:21.56px;padding-right:1.1px;">5月31日</div>
<div class="c" style="left:123px;top:424.84px;width:82px;height:20.56px;line-height:21.56px;padding-left:3px;">りんご</div>
<div class="c r n" style="left:205px;top:424.84px;width:82px;height:20.56px;line-height:21.56px;padding-right:1.1px;">150</div>
<div class="c r n" style="left:287px;top:424.84px;width:82px;height:20.56px;line-height:21.56px;padding-right:1.1px;">11</div>
<div class="c r n" style="left:369px;top:424.84px;width:82px;height:20.56px;line-height:21.56px;padding-right:1.1px;">1<span class="cm">,</span>650</div>
<div class="c r n d" style="left:42px;top:445.40px;width:81px;height:20.56px;line-height:21.56px;padding-right:1.1px;">6月7日</div>
<div class="c" style="left:123px;top:445.40px;width:82px;height:20.56px;line-height:21.56px;padding-left:3px;letter-spacing:1.3px;">みかん</div>
<div class="c r n" style="left:205px;top:445.40px;width:82px;height:20.56px;line-height:21.56px;padding-right:1.1px;">200</div>
<div class="c r n" style="left:287px;top:445.40px;width:82px;height:20.56px;line-height:21.56px;padding-right:1.1px;">16</div>
<div class="c r n" style="left:369px;top:445.40px;width:82px;height:20.56px;line-height:21.56px;padding-right:1.1px;">3<span class="cm">,</span>200</div>
<div class="c r n d" style="left:42px;top:465.96px;width:81px;height:20.56px;line-height:21.56px;padding-right:1.1px;">6月14日</div>
<div class="c" style="left:123px;top:465.96px;width:82px;height:20.56px;line-height:21.56px;padding-left:3px;letter-spacing:1.3px;">みかん</div>
<div class="c r n" style="left:205px;top:465.96px;width:82px;height:20.56px;line-height:21.56px;padding-right:1.1px;">200</div>
<div class="c r n" style="left:287px;top:465.96px;width:82px;height:20.56px;line-height:21.56px;padding-right:1.1px;">21</div>
<div class="c r n" style="left:369px;top:465.96px;width:82px;height:20.56px;line-height:21.56px;padding-right:1.1px;">4<span class="cm">,</span>200</div>
<div class="c r n d" style="left:42px;top:486.52px;width:81px;height:20.56px;line-height:21.56px;padding-right:1.1px;">6月21日</div>
<div class="c" style="left:123px;top:486.52px;width:82px;height:20.56px;line-height:21.56px;padding-left:3px;">いちご</div>
<div class="c r n" style="left:205px;top:486.52px;width:82px;height:20.56px;line-height:21.56px;padding-right:1.1px;">450</div>
<div class="c r n" style="left:287px;top:486.52px;width:82px;height:20.56px;line-height:21.56px;padding-right:1.1px;">27</div>
<div class="c r n" style="left:369px;top:486.52px;width:82px;height:20.56px;line-height:21.56px;padding-right:1.1px;">12<span class="cm">,</span>150</div>
<div class="c r n d" style="left:42px;top:507.08px;width:81px;height:20.56px;line-height:21.56px;padding-right:1.1px;">6月28日</div>
<div class="c" style="left:123px;top:507.08px;width:82px;height:20.56px;line-height:21.56px;padding-left:3px;">りんご</div>
<div class="c r n" style="left:205px;top:507.08px;width:82px;height:20.56px;line-height:21.56px;padding-right:1.1px;">150</div>
<div class="c r n" style="left:287px;top:507.08px;width:82px;height:20.56px;line-height:21.56px;padding-right:1.1px;">5</div>
<div class="c r n" style="left:369px;top:507.08px;width:82px;height:20.56px;line-height:21.56px;padding-right:1.1px;">750</div>
<div class="c r n d" style="left:42px;top:527.64px;width:81px;height:20.56px;line-height:21.56px;padding-right:1.1px;">7月5日</div>
<div class="c" style="left:123px;top:527.64px;width:82px;height:20.56px;line-height:21.56px;padding-left:3px;letter-spacing:1.3px;">みかん</div>
<div class="c r n" style="left:205px;top:527.64px;width:82px;height:20.56px;line-height:21.56px;padding-right:1.1px;">200</div>
<div class="c r n" style="left:287px;top:527.64px;width:82px;height:20.56px;line-height:21.56px;padding-right:1.1px;">25</div>
<div class="c r n" style="left:369px;top:527.64px;width:82px;height:20.56px;line-height:21.56px;padding-right:1.1px;">5<span class="cm">,</span>000</div>
<div class="c r n d" style="left:42px;top:548.20px;width:81px;height:20.56px;line-height:21.56px;padding-right:1.1px;">7月12日</div>
<div class="c" style="left:123px;top:548.20px;width:82px;height:20.56px;line-height:21.56px;padding-left:3px;">いちご</div>
<div class="c r n" style="left:205px;top:548.20px;width:82px;height:20.56px;line-height:21.56px;padding-right:1.1px;">450</div>
<div class="c r n" style="left:287px;top:548.20px;width:82px;height:20.56px;line-height:21.56px;padding-right:1.1px;">18</div>
<div class="c r n" style="left:369px;top:548.20px;width:82px;height:20.56px;line-height:21.56px;padding-right:1.1px;">8<span class="cm">,</span>100</div>
<div class="c m" style="left:534px;top:239.80px;width:206px;height:20.56px;line-height:21.56px;">合計金額</div>
<div class="c" style="left:534px;top:260.36px;width:123px;height:20.56px;line-height:21.56px;padding-left:3px;">りんご</div>
<div class="c" style="left:534px;top:280.92px;width:123px;height:20.56px;line-height:21.56px;padding-left:3px;letter-spacing:1.3px;">みかん</div>
<div class="c" style="left:534px;top:301.48px;width:123px;height:20.56px;line-height:21.56px;padding-left:3px;">いちご</div>
<div class="c m" style="left:534px;top:342.60px;width:206px;height:20.56px;line-height:21.56px;">合計金額</div>
<div class="c n" style="left:534px;top:363.16px;width:123px;height:20.56px;line-height:21.56px;padding-left:3px;">2023/5/1以降</div>
<div class="c m" style="left:822px;top:239.80px;width:206px;height:20.56px;line-height:21.56px;">合計数量</div>
<div class="c" style="left:822px;top:280.92px;width:123px;height:20.56px;line-height:21.56px;padding-left:3px;letter-spacing:1.3px;">みかん</div>
<div class="c" style="left:822px;top:301.48px;width:123px;height:20.56px;line-height:21.56px;padding-left:3px;">いちご</div>
<div class="c m" style="left:822px;top:342.60px;width:206px;height:20.56px;line-height:21.56px;">合計数量</div>
<div class="bk" style="left:534px;top:259px;width:207px;height:1px"></div>
<div class="bk2" style="left:534px;top:258px;width:207px;height:1px"></div>
<div class="bk" style="left:534px;top:279px;width:207px;height:1px"></div>
<div class="bk2" style="left:534px;top:278px;width:207px;height:1px"></div>
<div class="bk" style="left:534px;top:300px;width:207px;height:1px"></div>
<div class="bk2" style="left:534px;top:299px;width:207px;height:1px"></div>
<div class="bk" style="left:534px;top:321px;width:207px;height:1px"></div>
<div class="bk2" style="left:534px;top:320px;width:207px;height:1px"></div>
<div class="bk" style="left:534px;top:239px;width:1px;height:83px"></div>
<div class="bk2" style="left:535px;top:239px;width:1px;height:83px"></div>
<div class="bk" style="left:740px;top:239px;width:1px;height:83px"></div>
<div class="bk2" style="left:741px;top:239px;width:1px;height:83px"></div>
<div class="bk" style="left:657px;top:259px;width:1px;height:63px"></div>
<div class="bk2" style="left:658px;top:259px;width:1px;height:63px"></div>
<div class="bk" style="left:534px;top:341px;width:207px;height:1px"></div>
<div class="bk2" style="left:534px;top:340px;width:207px;height:1px"></div>
<div class="bk" style="left:534px;top:362px;width:207px;height:1px"></div>
<div class="bk2" style="left:534px;top:361px;width:207px;height:1px"></div>
<div class="bk" style="left:534px;top:382px;width:207px;height:1px"></div>
<div class="bk2" style="left:534px;top:381px;width:207px;height:1px"></div>
<div class="bk" style="left:534px;top:341px;width:1px;height:42px"></div>
<div class="bk2" style="left:535px;top:341px;width:1px;height:42px"></div>
<div class="bk" style="left:740px;top:341px;width:1px;height:42px"></div>
<div class="bk2" style="left:741px;top:341px;width:1px;height:42px"></div>
<div class="bk" style="left:657px;top:362px;width:1px;height:21px"></div>
<div class="bk2" style="left:658px;top:362px;width:1px;height:21px"></div>
<div class="bk" style="left:822px;top:259px;width:207px;height:1px"></div>
<div class="bk2" style="left:822px;top:258px;width:207px;height:1px"></div>
<div class="bk" style="left:822px;top:279px;width:207px;height:1px"></div>
<div class="bk2" style="left:822px;top:278px;width:207px;height:1px"></div>
<div class="bk" style="left:822px;top:300px;width:207px;height:1px"></div>
<div class="bk2" style="left:822px;top:299px;width:207px;height:1px"></div>
<div class="bk" style="left:822px;top:321px;width:207px;height:1px"></div>
<div class="bk2" style="left:822px;top:320px;width:207px;height:1px"></div>
<div class="bk" style="left:822px;top:239px;width:1px;height:83px"></div>
<div class="bk2" style="left:823px;top:239px;width:1px;height:83px"></div>
<div class="bk" style="left:1028px;top:239px;width:1px;height:83px"></div>
<div class="bk2" style="left:1029px;top:239px;width:1px;height:83px"></div>
<div class="bk" style="left:945px;top:259px;width:1px;height:63px"></div>
<div class="bk2" style="left:946px;top:259px;width:1px;height:63px"></div>
<div class="bk" style="left:822px;top:341px;width:207px;height:1px"></div>
<div class="bk2" style="left:822px;top:340px;width:207px;height:1px"></div>
<div class="bk" style="left:822px;top:362px;width:207px;height:1px"></div>
<div class="bk2" style="left:822px;top:361px;width:207px;height:1px"></div>
<div class="bk" style="left:822px;top:382px;width:207px;height:1px"></div>
<div class="bk2" style="left:822px;top:381px;width:207px;height:1px"></div>
<div class="bk" style="left:822px;top:341px;width:1px;height:42px"></div>
<div class="bk2" style="left:823px;top:341px;width:1px;height:42px"></div>
<div class="bk" style="left:1028px;top:341px;width:1px;height:42px"></div>
<div class="bk2" style="left:1029px;top:341px;width:1px;height:42px"></div>
<div class="bk" style="left:945px;top:362px;width:1px;height:21px"></div>
<div class="bk2" style="left:946px;top:362px;width:1px;height:21px"></div>
<div class="abs" style="left:656px;top:237px;width:85px;height:2px;background:#1e7145"></div>
<div class="abs" style="left:656px;top:257px;width:291px;height:24px;background:#fff;border:solid #1e7145;border-width:3px 2px 3px 3px"></div>
<div class="abs ed" style="left:660px;top:260.36px;height:20.56px;line-height:21.56px"><span class="fn">=SUMIF</span><span class="hp">(</span><span style="color:#5b84e3">B:B</span>,<span class="jq">”りんご”</span>,<span style="color:#e8474f">E:E</span><span class="hp">)</span></div>
</div>
<div id="callout" class="abs" style="left:669px;top:307px;width:347px;height:129.3px;background:#107c41;border-radius:22px"></div>
<svg class="abs" style="left:690px;top:280px" width="44" height="30" viewBox="0 0 44 30"><path d="M4.7 27.5 L21.9 4.3 L39.3 27.5 Z" fill="#107c41"/></svg>
<div class="abs" style="left:677.5px;top:316px;color:#fff;font-size:36px;line-height:54px;white-space:nowrap;letter-spacing:0.8px;font-family:'Noto Sans CJK JP',sans-serif">【りんご】の</div>
<div class="abs" style="left:733px;top:369px;color:#fff;font-size:36px;line-height:54px;white-space:nowrap;letter-spacing:1px;font-family:'Noto Sans CJK JP',sans-serif">【金額】を集計</div>

</body></html>
